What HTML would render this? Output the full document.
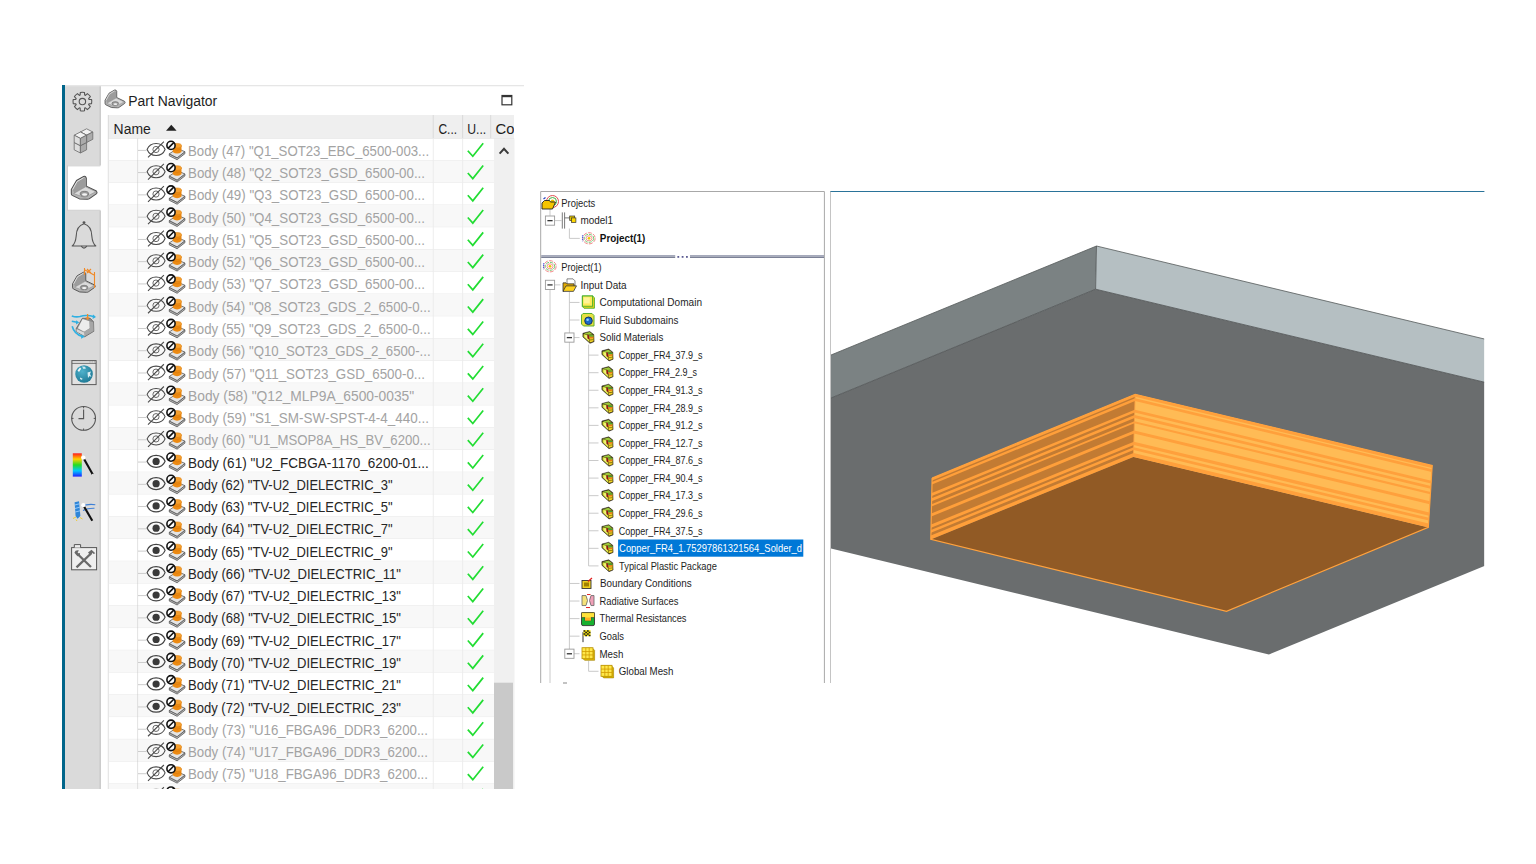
<!DOCTYPE html>
<html><head><meta charset="utf-8"><title>Part Navigator</title>
<style>html,body{margin:0;padding:0;background:#fff;width:1536px;height:864px;overflow:hidden;font-family:"Liberation Sans",sans-serif} svg{display:block}</style>
</head><body>
<svg width="1536" height="864" viewBox="0 0 1536 864" font-family="Liberation Sans, sans-serif">
<defs>
<clipPath id="gridclip"><rect x="108" y="138.5" width="406" height="650.5"/></clipPath>
<clipPath id="coclip"><rect x="491" y="115" width="23" height="23.5"/></clipPath>
<clipPath id="viewclip"><rect x="831" y="191.5" width="653.4" height="491.5"/></clipPath>
<g id="eyeOn">
  <path d="M147.1 11.3 C150.3 3.3, 161.9 3.3, 165.1 11.3 C161.9 19.3, 150.3 19.3, 147.1 11.3 Z" fill="none" stroke="#444" stroke-width="1.2"/>
  <circle cx="156.1" cy="11.4" r="3.6" fill="#3a3a3a"/>
</g>
<g id="eyeOff">
  <path d="M147.1 11.2 C150.3 3.2, 161.9 3.2, 165.1 11.2 C161.9 19.2, 150.3 19.2, 147.1 11.2 Z" fill="none" stroke="#4a4a4a" stroke-width="1.05"/>
  <circle cx="156" cy="11.2" r="3.1" fill="none" stroke="#6a6a6a" stroke-width="1"/>
  <line x1="148" y1="19.1" x2="163.9" y2="3.3" stroke="#4a4a4a" stroke-width="1.1"/>
</g>
<g id="body">
  <path d="M169.3 15.5 L177.1 19.5 L184.9 13.4 L184.9 15.4 L177.1 21.4 L169.3 17.5 Z" fill="#b8b8b8" stroke="#555" stroke-width="0.8" stroke-linejoin="round"/>
  <path d="M169.3 15.5 L177.3 10.2 L184.9 13.4 L177.1 19.5 Z" fill="#e4e4e4" stroke="#555" stroke-width="0.8" stroke-linejoin="round"/>
  <path d="M172.7 7.4 L172.7 13.6 Q177.1 17 181.5 13.6 L181.5 7.4 Z" fill="#ec8a12"/>
  <ellipse cx="177.1" cy="7.4" rx="4.4" ry="2.3" fill="#f5a030" stroke="#d87a0a" stroke-width="0.5"/>
  <path d="M173.4 10.8 Q177.2 13.2 181 10.8" fill="none" stroke="#d8780c" stroke-width="0.6"/>
  <circle cx="171" cy="7.1" r="4.1" fill="#fff" stroke="#111" stroke-width="1.6"/>
  <line x1="174" y1="4.1" x2="168" y2="10.1" stroke="#111" stroke-width="1.6"/>
</g>
<g id="check">
  <path d="M467.8 12.4 L472.8 18.0 L483.2 5.0" fill="none" stroke="#22dd33" stroke-width="1.7"/>
</g>
</defs>
<rect width="1536" height="864" fill="#ffffff"/>
<rect x="62" y="85" width="3" height="704" fill="#00658a"/><rect x="65" y="85.5" width="35.5" height="703.5" fill="#dadada"/><rect x="99.6" y="85.5" width="1.2" height="703.5" fill="#c4c4c4"/><rect x="65" y="85" width="459" height="1.3" fill="#e6e6e6"/><rect x="67.3" y="165.5" width="34" height="45" fill="#ffffff"/><rect x="67.3" y="165.5" width="33" height="0.8" fill="#c6c6c6"/><rect x="67.3" y="209.8" width="33" height="0.8" fill="#c6c6c6"/><rect x="67" y="165.5" width="0.8" height="45" fill="#c6c6c6"/><rect x="108" y="115" width="406" height="23.5" fill="#efefef"/><rect x="108" y="138" width="406" height="0.8" fill="#dcdcdc"/><rect x="432.7" y="115" width="1" height="23.5" fill="#dadada"/><rect x="462.1" y="115" width="1" height="23.5" fill="#dadada"/><rect x="490.2" y="115" width="1" height="23.5" fill="#dadada"/><rect x="107.8" y="115" width="1" height="674" fill="#dadada"/><rect x="494" y="138.5" width="20.5" height="650.5" fill="#f0f0f0"/><rect x="494" y="682.7" width="19" height="106.3" fill="#c9c9c9"/><path d="M499.6 153.6 L504 148.8 L508.4 153.6" fill="none" stroke="#3a3a3a" stroke-width="2"/><path d="M166 130.7 L171.3 124.8 L176.6 130.7 Z" fill="#222"/><rect x="502" y="95.5" width="9.8" height="9.3" fill="none" stroke="#333" stroke-width="1.2"/><rect x="502" y="95.2" width="9.8" height="2" fill="#333"/>
<g clip-path="url(#gridclip)"><rect x="108.8" y="138.30" width="385.2" height="22.264" fill="#ffffff"/><rect x="108.8" y="159.96" width="385.2" height="1" fill="#ececec"/><rect x="138" y="149.90" width="8.5" height="0.9" fill="#c8c8c8"/><use href="#eyeOff" x="0" y="138.30"/><use href="#body" x="0" y="138.30"/><use href="#check" x="0" y="138.30"/><rect x="108.8" y="160.56" width="385.2" height="22.264" fill="#f8f8f8"/><rect x="108.8" y="182.23" width="385.2" height="1" fill="#ececec"/><rect x="138" y="172.16" width="8.5" height="0.9" fill="#c8c8c8"/><use href="#eyeOff" x="0" y="160.56"/><use href="#body" x="0" y="160.56"/><use href="#check" x="0" y="160.56"/><rect x="108.8" y="182.83" width="385.2" height="22.264" fill="#ffffff"/><rect x="108.8" y="204.49" width="385.2" height="1" fill="#ececec"/><rect x="138" y="194.43" width="8.5" height="0.9" fill="#c8c8c8"/><use href="#eyeOff" x="0" y="182.83"/><use href="#body" x="0" y="182.83"/><use href="#check" x="0" y="182.83"/><rect x="108.8" y="205.09" width="385.2" height="22.264" fill="#f8f8f8"/><rect x="108.8" y="226.76" width="385.2" height="1" fill="#ececec"/><rect x="138" y="216.69" width="8.5" height="0.9" fill="#c8c8c8"/><use href="#eyeOff" x="0" y="205.09"/><use href="#body" x="0" y="205.09"/><use href="#check" x="0" y="205.09"/><rect x="108.8" y="227.36" width="385.2" height="22.264" fill="#ffffff"/><rect x="108.8" y="249.02" width="385.2" height="1" fill="#ececec"/><rect x="138" y="238.96" width="8.5" height="0.9" fill="#c8c8c8"/><use href="#eyeOff" x="0" y="227.36"/><use href="#body" x="0" y="227.36"/><use href="#check" x="0" y="227.36"/><rect x="108.8" y="249.62" width="385.2" height="22.264" fill="#f8f8f8"/><rect x="108.8" y="271.28" width="385.2" height="1" fill="#ececec"/><rect x="138" y="261.22" width="8.5" height="0.9" fill="#c8c8c8"/><use href="#eyeOff" x="0" y="249.62"/><use href="#body" x="0" y="249.62"/><use href="#check" x="0" y="249.62"/><rect x="108.8" y="271.88" width="385.2" height="22.264" fill="#ffffff"/><rect x="108.8" y="293.55" width="385.2" height="1" fill="#ececec"/><rect x="138" y="283.48" width="8.5" height="0.9" fill="#c8c8c8"/><use href="#eyeOff" x="0" y="271.88"/><use href="#body" x="0" y="271.88"/><use href="#check" x="0" y="271.88"/><rect x="108.8" y="294.15" width="385.2" height="22.264" fill="#f8f8f8"/><rect x="108.8" y="315.81" width="385.2" height="1" fill="#ececec"/><rect x="138" y="305.75" width="8.5" height="0.9" fill="#c8c8c8"/><use href="#eyeOff" x="0" y="294.15"/><use href="#body" x="0" y="294.15"/><use href="#check" x="0" y="294.15"/><rect x="108.8" y="316.41" width="385.2" height="22.264" fill="#ffffff"/><rect x="108.8" y="338.08" width="385.2" height="1" fill="#ececec"/><rect x="138" y="328.01" width="8.5" height="0.9" fill="#c8c8c8"/><use href="#eyeOff" x="0" y="316.41"/><use href="#body" x="0" y="316.41"/><use href="#check" x="0" y="316.41"/><rect x="108.8" y="338.68" width="385.2" height="22.264" fill="#f8f8f8"/><rect x="108.8" y="360.34" width="385.2" height="1" fill="#ececec"/><rect x="138" y="350.28" width="8.5" height="0.9" fill="#c8c8c8"/><use href="#eyeOff" x="0" y="338.68"/><use href="#body" x="0" y="338.68"/><use href="#check" x="0" y="338.68"/><rect x="108.8" y="360.94" width="385.2" height="22.264" fill="#ffffff"/><rect x="108.8" y="382.60" width="385.2" height="1" fill="#ececec"/><rect x="138" y="372.54" width="8.5" height="0.9" fill="#c8c8c8"/><use href="#eyeOff" x="0" y="360.94"/><use href="#body" x="0" y="360.94"/><use href="#check" x="0" y="360.94"/><rect x="108.8" y="383.20" width="385.2" height="22.264" fill="#f8f8f8"/><rect x="108.8" y="404.87" width="385.2" height="1" fill="#ececec"/><rect x="138" y="394.80" width="8.5" height="0.9" fill="#c8c8c8"/><use href="#eyeOff" x="0" y="383.20"/><use href="#body" x="0" y="383.20"/><use href="#check" x="0" y="383.20"/><rect x="108.8" y="405.47" width="385.2" height="22.264" fill="#ffffff"/><rect x="108.8" y="427.13" width="385.2" height="1" fill="#ececec"/><rect x="138" y="417.07" width="8.5" height="0.9" fill="#c8c8c8"/><use href="#eyeOff" x="0" y="405.47"/><use href="#body" x="0" y="405.47"/><use href="#check" x="0" y="405.47"/><rect x="108.8" y="427.73" width="385.2" height="22.264" fill="#f8f8f8"/><rect x="108.8" y="449.40" width="385.2" height="1" fill="#ececec"/><rect x="138" y="439.33" width="8.5" height="0.9" fill="#c8c8c8"/><use href="#eyeOff" x="0" y="427.73"/><use href="#body" x="0" y="427.73"/><use href="#check" x="0" y="427.73"/><rect x="108.8" y="450.00" width="385.2" height="22.264" fill="#ffffff"/><rect x="108.8" y="471.66" width="385.2" height="1" fill="#ececec"/><rect x="138" y="461.60" width="8.5" height="0.9" fill="#c8c8c8"/><use href="#eyeOn" x="0" y="450.00"/><use href="#body" x="0" y="450.00"/><use href="#check" x="0" y="450.00"/><rect x="108.8" y="472.26" width="385.2" height="22.264" fill="#f8f8f8"/><rect x="108.8" y="493.92" width="385.2" height="1" fill="#ececec"/><rect x="138" y="483.86" width="8.5" height="0.9" fill="#c8c8c8"/><use href="#eyeOn" x="0" y="472.26"/><use href="#body" x="0" y="472.26"/><use href="#check" x="0" y="472.26"/><rect x="108.8" y="494.52" width="385.2" height="22.264" fill="#ffffff"/><rect x="108.8" y="516.19" width="385.2" height="1" fill="#ececec"/><rect x="138" y="506.12" width="8.5" height="0.9" fill="#c8c8c8"/><use href="#eyeOn" x="0" y="494.52"/><use href="#body" x="0" y="494.52"/><use href="#check" x="0" y="494.52"/><rect x="108.8" y="516.79" width="385.2" height="22.264" fill="#f8f8f8"/><rect x="108.8" y="538.45" width="385.2" height="1" fill="#ececec"/><rect x="138" y="528.39" width="8.5" height="0.9" fill="#c8c8c8"/><use href="#eyeOn" x="0" y="516.79"/><use href="#body" x="0" y="516.79"/><use href="#check" x="0" y="516.79"/><rect x="108.8" y="539.05" width="385.2" height="22.264" fill="#ffffff"/><rect x="108.8" y="560.72" width="385.2" height="1" fill="#ececec"/><rect x="138" y="550.65" width="8.5" height="0.9" fill="#c8c8c8"/><use href="#eyeOn" x="0" y="539.05"/><use href="#body" x="0" y="539.05"/><use href="#check" x="0" y="539.05"/><rect x="108.8" y="561.32" width="385.2" height="22.264" fill="#f8f8f8"/><rect x="108.8" y="582.98" width="385.2" height="1" fill="#ececec"/><rect x="138" y="572.92" width="8.5" height="0.9" fill="#c8c8c8"/><use href="#eyeOn" x="0" y="561.32"/><use href="#body" x="0" y="561.32"/><use href="#check" x="0" y="561.32"/><rect x="108.8" y="583.58" width="385.2" height="22.264" fill="#ffffff"/><rect x="108.8" y="605.24" width="385.2" height="1" fill="#ececec"/><rect x="138" y="595.18" width="8.5" height="0.9" fill="#c8c8c8"/><use href="#eyeOn" x="0" y="583.58"/><use href="#body" x="0" y="583.58"/><use href="#check" x="0" y="583.58"/><rect x="108.8" y="605.84" width="385.2" height="22.264" fill="#f8f8f8"/><rect x="108.8" y="627.51" width="385.2" height="1" fill="#ececec"/><rect x="138" y="617.44" width="8.5" height="0.9" fill="#c8c8c8"/><use href="#eyeOn" x="0" y="605.84"/><use href="#body" x="0" y="605.84"/><use href="#check" x="0" y="605.84"/><rect x="108.8" y="628.11" width="385.2" height="22.264" fill="#ffffff"/><rect x="108.8" y="649.77" width="385.2" height="1" fill="#ececec"/><rect x="138" y="639.71" width="8.5" height="0.9" fill="#c8c8c8"/><use href="#eyeOn" x="0" y="628.11"/><use href="#body" x="0" y="628.11"/><use href="#check" x="0" y="628.11"/><rect x="108.8" y="650.37" width="385.2" height="22.264" fill="#f8f8f8"/><rect x="108.8" y="672.04" width="385.2" height="1" fill="#ececec"/><rect x="138" y="661.97" width="8.5" height="0.9" fill="#c8c8c8"/><use href="#eyeOn" x="0" y="650.37"/><use href="#body" x="0" y="650.37"/><use href="#check" x="0" y="650.37"/><rect x="108.8" y="672.64" width="385.2" height="22.264" fill="#ffffff"/><rect x="108.8" y="694.30" width="385.2" height="1" fill="#ececec"/><rect x="138" y="684.24" width="8.5" height="0.9" fill="#c8c8c8"/><use href="#eyeOn" x="0" y="672.64"/><use href="#body" x="0" y="672.64"/><use href="#check" x="0" y="672.64"/><rect x="108.8" y="694.90" width="385.2" height="22.264" fill="#f8f8f8"/><rect x="108.8" y="716.56" width="385.2" height="1" fill="#ececec"/><rect x="138" y="706.50" width="8.5" height="0.9" fill="#c8c8c8"/><use href="#eyeOn" x="0" y="694.90"/><use href="#body" x="0" y="694.90"/><use href="#check" x="0" y="694.90"/><rect x="108.8" y="717.16" width="385.2" height="22.264" fill="#ffffff"/><rect x="108.8" y="738.83" width="385.2" height="1" fill="#ececec"/><rect x="138" y="728.76" width="8.5" height="0.9" fill="#c8c8c8"/><use href="#eyeOff" x="0" y="717.16"/><use href="#body" x="0" y="717.16"/><use href="#check" x="0" y="717.16"/><rect x="108.8" y="739.43" width="385.2" height="22.264" fill="#f8f8f8"/><rect x="108.8" y="761.09" width="385.2" height="1" fill="#ececec"/><rect x="138" y="751.03" width="8.5" height="0.9" fill="#c8c8c8"/><use href="#eyeOff" x="0" y="739.43"/><use href="#body" x="0" y="739.43"/><use href="#check" x="0" y="739.43"/><rect x="108.8" y="761.69" width="385.2" height="22.264" fill="#ffffff"/><rect x="108.8" y="783.36" width="385.2" height="1" fill="#ececec"/><rect x="138" y="773.29" width="8.5" height="0.9" fill="#c8c8c8"/><use href="#eyeOff" x="0" y="761.69"/><use href="#body" x="0" y="761.69"/><use href="#check" x="0" y="761.69"/><rect x="108.8" y="783.96" width="385.2" height="22.264" fill="#f8f8f8"/><rect x="108.8" y="805.62" width="385.2" height="1" fill="#ececec"/><rect x="138" y="795.56" width="8.5" height="0.9" fill="#c8c8c8"/><use href="#eyeOff" x="0" y="783.96"/><use href="#body" x="0" y="783.96"/><use href="#check" x="0" y="783.96"/><rect x="432.8" y="138.5" width="0.9" height="650.5" fill="#ececec"/><rect x="462.2" y="138.5" width="0.9" height="650.5" fill="#ececec"/><line x1="137.6" y1="138.5" x2="137.6" y2="789" stroke="#bdbdbd" stroke-width="0.9" stroke-dasharray="1 1"/></g>
<path d="M80.15 95.08 L80.29 92.44 A9.4 9.4 0 0 1 84.51 92.44 L84.65 95.08 A6.9 6.9 0 0 1 85.42 95.40 L87.38 93.63 A9.4 9.4 0 0 1 90.37 96.62 L88.60 98.58 A6.9 6.9 0 0 1 88.92 99.35 L91.56 99.49 A9.4 9.4 0 0 1 91.56 103.71 L88.92 103.85 A6.9 6.9 0 0 1 88.60 104.62 L90.37 106.58 A9.4 9.4 0 0 1 87.38 109.57 L85.42 107.80 A6.9 6.9 0 0 1 84.65 108.12 L84.51 110.76 A9.4 9.4 0 0 1 80.29 110.76 L80.15 108.12 A6.9 6.9 0 0 1 79.38 107.80 L77.42 109.57 A9.4 9.4 0 0 1 74.43 106.58 L76.20 104.62 A6.9 6.9 0 0 1 75.88 103.85 L73.24 103.71 A9.4 9.4 0 0 1 73.24 99.49 L75.88 99.35 A6.9 6.9 0 0 1 76.20 98.58 L74.43 96.62 A9.4 9.4 0 0 1 77.42 93.63 L79.38 95.40 A6.9 6.9 0 0 1 80.15 95.08 Z" fill="none" stroke="#555" stroke-width="1.1" stroke-linejoin="round"/><circle cx="82.4" cy="101.6" r="3.2" fill="none" stroke="#555" stroke-width="1.1"/><path d="M80.4 139.3 L86.60000000000001 142.5 L80.4 145.70000000000002 L74.2 142.5 Z" fill="#f2f2f2" stroke="#6a6a6a" stroke-width="0.8" stroke-linejoin="round"/><path d="M74.2 142.5 L80.4 145.70000000000002 L80.4 153.00000000000003 L74.2 149.8 Z" fill="#dedede" stroke="#6a6a6a" stroke-width="0.8" stroke-linejoin="round"/><path d="M80.4 145.70000000000002 L86.60000000000001 142.5 L86.60000000000001 149.8 L80.4 153.00000000000003 Z" fill="#ababab" stroke="#6a6a6a" stroke-width="0.8" stroke-linejoin="round"/><path d="M86.6 128.8 L92.8 132.0 L86.6 135.20000000000002 L80.39999999999999 132.0 Z" fill="#f2f2f2" stroke="#6a6a6a" stroke-width="0.8" stroke-linejoin="round"/><path d="M80.39999999999999 132.0 L86.6 135.20000000000002 L86.6 142.50000000000003 L80.39999999999999 139.3 Z" fill="#dedede" stroke="#6a6a6a" stroke-width="0.8" stroke-linejoin="round"/><path d="M86.6 135.20000000000002 L92.8 132.0 L92.8 139.3 L86.6 142.50000000000003 Z" fill="#ababab" stroke="#6a6a6a" stroke-width="0.8" stroke-linejoin="round"/><path d="M80.4 132 L86.60000000000001 135.2 L80.4 138.4 L74.2 135.2 Z" fill="#f2f2f2" stroke="#6a6a6a" stroke-width="0.8" stroke-linejoin="round"/><path d="M74.2 135.2 L80.4 138.4 L80.4 145.70000000000002 L74.2 142.5 Z" fill="#dedede" stroke="#6a6a6a" stroke-width="0.8" stroke-linejoin="round"/><path d="M80.4 138.4 L86.60000000000001 135.2 L86.60000000000001 142.5 L80.4 145.70000000000002 Z" fill="#ababab" stroke="#6a6a6a" stroke-width="0.8" stroke-linejoin="round"/><g transform="translate(71,176.2) scale(1.0)">
<path d="M0.3 13.4 L5.5 4.3 L12.6 0.3 Q14.5 -0.4 15.3 1.9 L15.3 9.9 L25.4 14.8 Q26.6 16.2 25.6 17.4 L18.5 22.4 Q17.5 23.2 16 23.1 L8.5 22.7 L1.2 19.2 Q0.2 18.5 0.3 17.2 Z" fill="#b4b4b4" stroke="#4e4e4e" stroke-width="1.05" stroke-linejoin="round"/>
<path d="M1.8 13.6 L6.2 5.2 L12.9 1.4 L14.4 2.4 L14.4 10.6 L8 14.3 L3.4 17.2 Z" fill="#9c9c9c"/>
<path d="M1.6 13.4 L6 5.4 L12.6 1.5" fill="none" stroke="#e6e6e6" stroke-width="0.9"/>
<path d="M2.6 17.4 L14.6 10.6 L24.8 15.5 L14 21.3 Z" fill="#dadada" stroke="#808080" stroke-width="0.5"/>
<ellipse cx="13.4" cy="17.6" rx="4.3" ry="2.5" fill="#9a9a9a" stroke="#5a5a5a" stroke-width="0.6"/>
<ellipse cx="13.6" cy="18.3" rx="2.6" ry="1.2" fill="#f4f4f4"/>
</g><path d="M72.2 246 Q75.5 243.5 76.2 236 Q76.5 226 84 223.8 Q91.5 226 91.8 236 Q92.5 243.5 95.8 246 Z" fill="none" stroke="#555" stroke-width="1.1" stroke-linejoin="round"/><circle cx="84" cy="222.6" r="1.4" fill="#555"/><path d="M81.2 246.2 Q84 250 86.8 246.2" fill="none" stroke="#555" stroke-width="1.1"/><g transform="translate(72.3,272) scale(0.88)">
<path d="M0.3 13.4 L5.5 4.3 L12.6 0.3 Q14.5 -0.4 15.3 1.9 L15.3 9.9 L25.4 14.8 Q26.6 16.2 25.6 17.4 L18.5 22.4 Q17.5 23.2 16 23.1 L8.5 22.7 L1.2 19.2 Q0.2 18.5 0.3 17.2 Z" fill="#b4b4b4" stroke="#4e4e4e" stroke-width="1.05" stroke-linejoin="round"/>
<path d="M1.8 13.6 L6.2 5.2 L12.9 1.4 L14.4 2.4 L14.4 10.6 L8 14.3 L3.4 17.2 Z" fill="#9c9c9c"/>
<path d="M1.6 13.4 L6 5.4 L12.6 1.5" fill="none" stroke="#e6e6e6" stroke-width="0.9"/>
<path d="M2.6 17.4 L14.6 10.6 L24.8 15.5 L14 21.3 Z" fill="#dadada" stroke="#808080" stroke-width="0.5"/>
<ellipse cx="13.4" cy="17.6" rx="4.3" ry="2.5" fill="#9a9a9a" stroke="#5a5a5a" stroke-width="0.6"/>
<ellipse cx="13.6" cy="18.3" rx="2.6" ry="1.2" fill="#f4f4f4"/>
</g><path d="M84.5 268 L84.5 275 M94.5 272 L94.5 288 M85 270 L94 275 M87 269 L91 273 M91 269 L87 273" fill="none" stroke="#f08a28" stroke-width="1.1"/><path d="M82.4 318.2 L90.5 318.5 L93.5 321.8 L93.8 331.3 L84.7 336.8 L76.1 331.3 L76.3 328.4 Z" fill="#8c8c8c" stroke="#555" stroke-width="0.7" stroke-linejoin="round"/><path d="M82.6 319 L89.5 321.2 L89.8 328.2 L84.2 331.8 L77.8 328.2 Z" fill="#ececec"/><path d="M89.5 321.2 L93.4 322.2 L93.6 331 L84.7 336.2 L84.2 331.8 L89.8 328.2 Z" fill="#a6a6a6"/><path d="M76.6 329 L84.2 332.6 L84.5 336 L76.5 331.5 Z" fill="#d8d8d8"/><path d="M71.8 315.9 Q76 317.5 80 316.5 Q86 314.5 94.5 316.8" fill="none" stroke="#2fb0e2" stroke-width="1.6"/><path d="M93 314.6 L96 317 L92.6 318.9 Z" fill="#2fb0e2"/><path d="M71.8 321.3 L77 322.3" fill="none" stroke="#2fb0e2" stroke-width="1.6"/><path d="M76.2 320.2 L79.2 322.6 L76 324.4 Z" fill="#2fb0e2"/><path d="M72.2 326.3 Q74 334 82.5 336.6" fill="none" stroke="#2fb0e2" stroke-width="1.6"/><path d="M81.5 334.6 L84.8 336.8 L81 338.8 Z" fill="#2fb0e2"/><path d="M87.6 314 L87.6 318" fill="none" stroke="#f08a28" stroke-width="1.3"/><path d="M85.4 317.2 L89.8 317.2 L87.6 320.2 Z" fill="#f08a28"/><rect x="71.9" y="360.6" width="24.2" height="24" fill="#e2e2e2" stroke="#5a5a5a" stroke-width="1"/><line x1="71.9" y1="363.4" x2="96.1" y2="363.4" stroke="#5a5a5a" stroke-width="0.8"/><path d="M89.5 361.9 h1 M91.7 361.9 h1 M93.9 361.9 h1" stroke="#888" stroke-width="0.8"/><defs><radialGradient id="globeg" cx="0.4" cy="0.35" r="0.7"><stop offset="0" stop-color="#4fb2cc"/><stop offset="1" stop-color="#1d7894"/></radialGradient></defs><circle cx="84.05" cy="374" r="8.8" fill="url(#globeg)"/><path d="M77.5 370.5 L80 367.5 L81.2 368.8 L79 372 Z" fill="#f4f8fa"/><path d="M82 366.5 L85 366.8 L86 368.5 L83.5 369 Z" fill="#cfe8ef"/><path d="M87.5 372.5 L91 371.5 L90 374 L91.5 377 L89.5 376 L88 378 Z" fill="#d8eef4"/><path d="M80 377.5 L82.5 378.5 L82 380 L80 379 Z" fill="#cfe8ef"/><circle cx="83.6" cy="418.4" r="11.9" fill="none" stroke="#555" stroke-width="1.1"/><path d="M83.6 409.6 L83.6 418.6 L78.5 418.6" fill="none" stroke="#555" stroke-width="1.1"/><path d="M83.6 406.5 v1.8 M83.6 428.5 v1.8 M71.7 418.4 h1.8 M93.7 418.4 h1.8" stroke="#555" stroke-width="1"/><defs><linearGradient id="rainbow" x1="0" y1="0" x2="0" y2="1">
<stop offset="0" stop-color="#ff1a1a"/><stop offset="0.25" stop-color="#ffd000"/><stop offset="0.5" stop-color="#22dd22"/><stop offset="0.75" stop-color="#00c8ff"/><stop offset="1" stop-color="#2020ff"/></linearGradient></defs><rect x="72.8" y="453.3" width="9" height="23.3" fill="url(#rainbow)"/><line x1="83.6" y1="458.3" x2="92.8" y2="474.6" stroke="#111" stroke-width="2.1"/><circle cx="83.3" cy="457.6" r="2.2" fill="#fff"/><circle cx="92.8" cy="474.8" r="1" fill="#ddd"/><path d="M74.6 502.2 L79 501.2 L80.4 516 L77.5 518.8 L75.6 516 Z" fill="#2f86d8"/><path d="M74.8 505 L79.4 503.8 M75 508.5 L79.8 507.2 M75.2 512 L80 510.8" stroke="#9fd0ff" stroke-width="0.9"/><path d="M82 506.5 Q88 503.5 95.3 504.8 M83 510.5 Q88 508 94.5 508.2" fill="none" stroke="#3d7fd6" stroke-width="1.1"/><path d="M73 518.5 L76 517 M80 517.5 L82.5 519 M76 519.5 L77 521" stroke="#f0c820" stroke-width="0.9"/><line x1="83.6" y1="505.8" x2="92.3" y2="520.8" stroke="#111" stroke-width="2.1"/><circle cx="83.3" cy="505.2" r="2.1" fill="#fff"/><rect x="71.6" y="547.6" width="25" height="22.2" fill="#efefef" stroke="#555" stroke-width="1"/><path d="M74.3 547.6 L74.3 544.6 L80.6 544.6 L80.6 547.6" fill="#efefef" stroke="#555" stroke-width="1"/><path d="M77 553.5 L91 567 M91.5 553 L76.5 567.3" stroke="#6a6a6a" stroke-width="2.3"/><path d="M74.4 552.8 Q75.5 549.5 79 550.6 L77.6 552.2 L78.4 553.6 L80 553 Q80.6 556 77.4 556.2 Z" fill="#6a6a6a"/><path d="M88 552.6 L91.5 549.8 L95.3 553.2 L93.6 554 L92.4 552.8 L90.4 555.6 Z" fill="#6a6a6a"/><g transform="translate(104.8,89.8) scale(0.78)">
<path d="M0.3 13.4 L5.5 4.3 L12.6 0.3 Q14.5 -0.4 15.3 1.9 L15.3 9.9 L25.4 14.8 Q26.6 16.2 25.6 17.4 L18.5 22.4 Q17.5 23.2 16 23.1 L8.5 22.7 L1.2 19.2 Q0.2 18.5 0.3 17.2 Z" fill="#b4b4b4" stroke="#4e4e4e" stroke-width="1.05" stroke-linejoin="round"/>
<path d="M1.8 13.6 L6.2 5.2 L12.9 1.4 L14.4 2.4 L14.4 10.6 L8 14.3 L3.4 17.2 Z" fill="#9c9c9c"/>
<path d="M1.6 13.4 L6 5.4 L12.6 1.5" fill="none" stroke="#e6e6e6" stroke-width="0.9"/>
<path d="M2.6 17.4 L14.6 10.6 L24.8 15.5 L14 21.3 Z" fill="#dadada" stroke="#808080" stroke-width="0.5"/>
<ellipse cx="13.4" cy="17.6" rx="4.3" ry="2.5" fill="#9a9a9a" stroke="#5a5a5a" stroke-width="0.6"/>
<ellipse cx="13.6" cy="18.3" rx="2.6" ry="1.2" fill="#f4f4f4"/>
</g>
<rect x="540.5" y="191.5" width="284" height="491.5" fill="#ffffff"/><path d="M540.7 683 L540.7 191.5 L824.4 191.5 L824.4 683" fill="none" stroke="#a8a8a8" stroke-width="1"/><rect x="541.2" y="255" width="134" height="1.6" fill="#a6aabb"/><line x1="550" y1="289.46500000000003" x2="550" y2="683" stroke="#c4c4c4" stroke-width="0.9"/><line x1="569.4" y1="291.865" x2="569.4" y2="649.13" stroke="#c4c4c4" stroke-width="0.9"/><line x1="588.6" y1="344.56" x2="588.6" y2="565.905" stroke="#c4c4c4" stroke-width="0.9"/><line x1="588.6" y1="660.73" x2="588.6" y2="671.2950000000001" stroke="#c4c4c4" stroke-width="0.9"/><line x1="554.6" y1="284.87" x2="560.5" y2="284.87" stroke="#c4c4c4" stroke-width="0.9"/><line x1="569.4" y1="302.43" x2="579.5" y2="302.43" stroke="#c4c4c4" stroke-width="0.9"/><line x1="569.4" y1="320.00" x2="579.5" y2="320.00" stroke="#c4c4c4" stroke-width="0.9"/><line x1="574.0" y1="337.56" x2="579.5" y2="337.56" stroke="#c4c4c4" stroke-width="0.9"/><line x1="588.6" y1="355.12" x2="598.5" y2="355.12" stroke="#c4c4c4" stroke-width="0.9"/><line x1="588.6" y1="372.69" x2="598.5" y2="372.69" stroke="#c4c4c4" stroke-width="0.9"/><line x1="588.6" y1="390.25" x2="598.5" y2="390.25" stroke="#c4c4c4" stroke-width="0.9"/><line x1="588.6" y1="407.82" x2="598.5" y2="407.82" stroke="#c4c4c4" stroke-width="0.9"/><line x1="588.6" y1="425.38" x2="598.5" y2="425.38" stroke="#c4c4c4" stroke-width="0.9"/><line x1="588.6" y1="442.95" x2="598.5" y2="442.95" stroke="#c4c4c4" stroke-width="0.9"/><line x1="588.6" y1="460.51" x2="598.5" y2="460.51" stroke="#c4c4c4" stroke-width="0.9"/><line x1="588.6" y1="478.08" x2="598.5" y2="478.08" stroke="#c4c4c4" stroke-width="0.9"/><line x1="588.6" y1="495.65" x2="598.5" y2="495.65" stroke="#c4c4c4" stroke-width="0.9"/><line x1="588.6" y1="513.21" x2="598.5" y2="513.21" stroke="#c4c4c4" stroke-width="0.9"/><line x1="588.6" y1="530.78" x2="598.5" y2="530.78" stroke="#c4c4c4" stroke-width="0.9"/><line x1="588.6" y1="548.34" x2="598.5" y2="548.34" stroke="#c4c4c4" stroke-width="0.9"/><line x1="588.6" y1="565.90" x2="598.5" y2="565.90" stroke="#c4c4c4" stroke-width="0.9"/><line x1="569.4" y1="583.47" x2="579.5" y2="583.47" stroke="#c4c4c4" stroke-width="0.9"/><line x1="569.4" y1="601.04" x2="579.5" y2="601.04" stroke="#c4c4c4" stroke-width="0.9"/><line x1="569.4" y1="618.60" x2="579.5" y2="618.60" stroke="#c4c4c4" stroke-width="0.9"/><line x1="569.4" y1="636.16" x2="579.5" y2="636.16" stroke="#c4c4c4" stroke-width="0.9"/><line x1="574.0" y1="653.73" x2="579.5" y2="653.73" stroke="#c4c4c4" stroke-width="0.9"/><line x1="588.6" y1="671.30" x2="598.5" y2="671.30" stroke="#c4c4c4" stroke-width="0.9"/><rect x="541.2" y="256.6" width="134" height="1.4" fill="#7c8196"/><rect x="690" y="255" width="134" height="1.6" fill="#a6aabb"/><rect x="690" y="256.6" width="134" height="1.4" fill="#7c8196"/><rect x="677.4" y="256" width="1.8" height="1.8" fill="#5c5c92"/><rect x="681.7" y="256" width="1.8" height="1.8" fill="#5c5c92"/><rect x="686.0" y="256" width="1.8" height="1.8" fill="#5c5c92"/><line x1="550" y1="209" x2="550" y2="215.7" stroke="#c4c4c4" stroke-width="0.9"/><line x1="554.6" y1="220.6" x2="561.5" y2="220.6" stroke="#c4c4c4" stroke-width="0.9"/><rect x="545.4" y="216.0" width="9.2" height="9.2" fill="#fff" stroke="#9a9a9a" stroke-width="0.9"/><rect x="547.4" y="220.0" width="5.2" height="1.3" fill="#333"/><path d="M569.4 228.5 L569.4 238.4 L579.8 238.4" fill="none" stroke="#c4c4c4" stroke-width="0.9"/><g transform="translate(541.5,195)">
<circle cx="11" cy="6.5" r="6" fill="none" stroke="#e05050" stroke-width="1"/>
<circle cx="11" cy="6.5" r="4" fill="none" stroke="#40b040" stroke-width="1"/>
<circle cx="11" cy="6.5" r="2" fill="#f2c400"/>
<path d="M0.5 8 L3 5.5 L8 5.5 L9 7 L14 7 L11 14 L0.5 14 Z" fill="#f5c400" stroke="#222" stroke-width="0.9"/>
<path d="M2 4 L4 2.5" stroke="#2040c0" stroke-width="1.2"/>
</g><g transform="translate(562,212)">
<path d="M0.3 0.4 L0.3 16.6 M2.6 0.4 L2.6 16.6" stroke="#6a6a6a" stroke-width="0.9"/>
<path d="M2.6 5.9 L7.7 5.9" stroke="#6a6a6a" stroke-width="0.9"/>
<rect x="7.7" y="4" width="5" height="4.5" fill="#e8c800" stroke="#333" stroke-width="0.7"/>
<rect x="9.4" y="5.9" width="4.5" height="4.5" fill="#ffd800" stroke="#333" stroke-width="0.7"/>
</g><g transform="translate(582,232.3)">
<ellipse cx="7" cy="6" rx="6.2" ry="5.6" fill="none" stroke="#f07a7a" stroke-width="0.9" stroke-dasharray="4 1.2"/>
<ellipse cx="7" cy="6" rx="4.7" ry="4" fill="none" stroke="#5cc05c" stroke-width="0.9" stroke-dasharray="3 1"/>
<ellipse cx="7" cy="6" rx="3" ry="2.5" fill="none" stroke="#f07a7a" stroke-width="0.8"/>
<circle cx="7" cy="6" r="1.4" fill="#f0c800"/>
<path d="M0.6 3 L0.6 9" stroke="#5060e0" stroke-width="1.3" stroke-dasharray="1.2 0.6"/>
</g><g transform="translate(543,260.3)">
<ellipse cx="7" cy="6" rx="6.2" ry="5.6" fill="none" stroke="#f07a7a" stroke-width="0.9" stroke-dasharray="4 1.2"/>
<ellipse cx="7" cy="6" rx="4.7" ry="4" fill="none" stroke="#5cc05c" stroke-width="0.9" stroke-dasharray="3 1"/>
<ellipse cx="7" cy="6" rx="3" ry="2.5" fill="none" stroke="#f07a7a" stroke-width="0.8"/>
<circle cx="7" cy="6" r="1.4" fill="#f0c800"/>
<path d="M0.6 3 L0.6 9" stroke="#5060e0" stroke-width="1.3" stroke-dasharray="1.2 0.6"/>
</g><rect x="545.4" y="280.265" width="9.2" height="9.2" fill="#fff" stroke="#9a9a9a" stroke-width="0.9"/><rect x="547.4" y="284.265" width="5.2" height="1.3" fill="#333"/><g transform="translate(562,277.865)">
<path d="M5 4 L5 1 L11 1 L13 3 L13 8 L5 8 Z" fill="#fff" stroke="#555" stroke-width="0.7"/>
<path d="M1 13.5 L1 5 L4 5 L5 6 L12 6 L12 8 Z" fill="#e0a800" stroke="#333" stroke-width="0.8"/>
<path d="M1 13.5 L4 8 L14.5 8 L11.5 13.5 Z" fill="#ffd21e" stroke="#333" stroke-width="0.8"/>
</g><g transform="translate(581.8,295.43)">
<path d="M0.5 0.5 L10.8 0.5 L12.6 2.2 L12.6 12.8 L2.2 12.8 L0.5 11 Z" fill="#f2d21a" stroke="#46b02a" stroke-width="0.9" stroke-linejoin="round"/>
<rect x="0.6" y="0.6" width="10.2" height="10.2" fill="#ffe95a" stroke="#46b02a" stroke-width="0.9"/>
<rect x="2" y="2" width="6" height="6" fill="#fff6a8" opacity="0.8"/>
</g><g transform="translate(581,312.995)">
<path d="M0.5 2 L2 0.5 L11 0.5 L13 2.5 L13 13 L2.5 13 L0.5 11 Z" fill="#e8e040" stroke="#5cb030" stroke-width="1"/>
<circle cx="7.5" cy="7.8" r="3.8" fill="#1a68c8" stroke="#0a2a60" stroke-width="0.9"/>
<circle cx="6.6" cy="6.8" r="1.3" fill="#8ed0ff"/>
</g><rect x="564.8" y="332.96" width="9.2" height="9.2" fill="#fff" stroke="#9a9a9a" stroke-width="0.9"/><rect x="566.8" y="336.96" width="5.2" height="1.3" fill="#333"/><g transform="translate(581,330.56)">
<path d="M1.9 2.7 L8.7 0.9 L12.8 4 L13.1 11.1 L9 12.8 L1.9 6.4 Z" fill="#2a2010" stroke="#2a2010" stroke-width="0.5" stroke-linejoin="round"/>
<path d="M2.6 3.4 L7.6 4.4 L8.4 11.8 L2.5 6.2 Z" fill="#d4e03a"/>
<path d="M4 4.4 L6.6 5 L7.2 9.8 L4.2 7 Z" fill="#f0f27a"/>
<path d="M2.8 3 L8.6 1.5 L12 4 L7.6 4.3 Z" fill="#9cc838"/>
<path d="M8.1 4.6 L12.4 4.5 L12.6 10.8 L8.8 12 Z" fill="#f2d628"/>
<path d="M8.1 4.8 L12.4 4.7 L12.4 6.1 L8.2 6.3 Z" fill="#3ca030"/>
<path d="M8.2 6.3 L12.4 6.1 L12.4 7.6 L8.3 7.9 Z" fill="#e87818"/>
<path d="M6.2 4.1 L7.9 4.5 L8.2 9 L6.5 8 Z" fill="#8a1515"/>
<path d="M8.4 9 L12.5 8.6 L12.5 9.4 L8.5 9.9 Z" fill="#8a7010"/>
</g><g transform="translate(600,348.125)">
<path d="M1.9 2.7 L8.7 0.9 L12.8 4 L13.1 11.1 L9 12.8 L1.9 6.4 Z" fill="#2a2010" stroke="#2a2010" stroke-width="0.5" stroke-linejoin="round"/>
<path d="M2.6 3.4 L7.6 4.4 L8.4 11.8 L2.5 6.2 Z" fill="#d4e03a"/>
<path d="M4 4.4 L6.6 5 L7.2 9.8 L4.2 7 Z" fill="#f0f27a"/>
<path d="M2.8 3 L8.6 1.5 L12 4 L7.6 4.3 Z" fill="#9cc838"/>
<path d="M8.1 4.6 L12.4 4.5 L12.6 10.8 L8.8 12 Z" fill="#f2d628"/>
<path d="M8.1 4.8 L12.4 4.7 L12.4 6.1 L8.2 6.3 Z" fill="#3ca030"/>
<path d="M8.2 6.3 L12.4 6.1 L12.4 7.6 L8.3 7.9 Z" fill="#e87818"/>
<path d="M6.2 4.1 L7.9 4.5 L8.2 9 L6.5 8 Z" fill="#8a1515"/>
<path d="M8.4 9 L12.5 8.6 L12.5 9.4 L8.5 9.9 Z" fill="#8a7010"/>
</g><g transform="translate(600,365.69000000000005)">
<path d="M1.9 2.7 L8.7 0.9 L12.8 4 L13.1 11.1 L9 12.8 L1.9 6.4 Z" fill="#2a2010" stroke="#2a2010" stroke-width="0.5" stroke-linejoin="round"/>
<path d="M2.6 3.4 L7.6 4.4 L8.4 11.8 L2.5 6.2 Z" fill="#d4e03a"/>
<path d="M4 4.4 L6.6 5 L7.2 9.8 L4.2 7 Z" fill="#f0f27a"/>
<path d="M2.8 3 L8.6 1.5 L12 4 L7.6 4.3 Z" fill="#9cc838"/>
<path d="M8.1 4.6 L12.4 4.5 L12.6 10.8 L8.8 12 Z" fill="#f2d628"/>
<path d="M8.1 4.8 L12.4 4.7 L12.4 6.1 L8.2 6.3 Z" fill="#3ca030"/>
<path d="M8.2 6.3 L12.4 6.1 L12.4 7.6 L8.3 7.9 Z" fill="#e87818"/>
<path d="M6.2 4.1 L7.9 4.5 L8.2 9 L6.5 8 Z" fill="#8a1515"/>
<path d="M8.4 9 L12.5 8.6 L12.5 9.4 L8.5 9.9 Z" fill="#8a7010"/>
</g><g transform="translate(600,383.255)">
<path d="M1.9 2.7 L8.7 0.9 L12.8 4 L13.1 11.1 L9 12.8 L1.9 6.4 Z" fill="#2a2010" stroke="#2a2010" stroke-width="0.5" stroke-linejoin="round"/>
<path d="M2.6 3.4 L7.6 4.4 L8.4 11.8 L2.5 6.2 Z" fill="#d4e03a"/>
<path d="M4 4.4 L6.6 5 L7.2 9.8 L4.2 7 Z" fill="#f0f27a"/>
<path d="M2.8 3 L8.6 1.5 L12 4 L7.6 4.3 Z" fill="#9cc838"/>
<path d="M8.1 4.6 L12.4 4.5 L12.6 10.8 L8.8 12 Z" fill="#f2d628"/>
<path d="M8.1 4.8 L12.4 4.7 L12.4 6.1 L8.2 6.3 Z" fill="#3ca030"/>
<path d="M8.2 6.3 L12.4 6.1 L12.4 7.6 L8.3 7.9 Z" fill="#e87818"/>
<path d="M6.2 4.1 L7.9 4.5 L8.2 9 L6.5 8 Z" fill="#8a1515"/>
<path d="M8.4 9 L12.5 8.6 L12.5 9.4 L8.5 9.9 Z" fill="#8a7010"/>
</g><g transform="translate(600,400.82000000000005)">
<path d="M1.9 2.7 L8.7 0.9 L12.8 4 L13.1 11.1 L9 12.8 L1.9 6.4 Z" fill="#2a2010" stroke="#2a2010" stroke-width="0.5" stroke-linejoin="round"/>
<path d="M2.6 3.4 L7.6 4.4 L8.4 11.8 L2.5 6.2 Z" fill="#d4e03a"/>
<path d="M4 4.4 L6.6 5 L7.2 9.8 L4.2 7 Z" fill="#f0f27a"/>
<path d="M2.8 3 L8.6 1.5 L12 4 L7.6 4.3 Z" fill="#9cc838"/>
<path d="M8.1 4.6 L12.4 4.5 L12.6 10.8 L8.8 12 Z" fill="#f2d628"/>
<path d="M8.1 4.8 L12.4 4.7 L12.4 6.1 L8.2 6.3 Z" fill="#3ca030"/>
<path d="M8.2 6.3 L12.4 6.1 L12.4 7.6 L8.3 7.9 Z" fill="#e87818"/>
<path d="M6.2 4.1 L7.9 4.5 L8.2 9 L6.5 8 Z" fill="#8a1515"/>
<path d="M8.4 9 L12.5 8.6 L12.5 9.4 L8.5 9.9 Z" fill="#8a7010"/>
</g><g transform="translate(600,418.385)">
<path d="M1.9 2.7 L8.7 0.9 L12.8 4 L13.1 11.1 L9 12.8 L1.9 6.4 Z" fill="#2a2010" stroke="#2a2010" stroke-width="0.5" stroke-linejoin="round"/>
<path d="M2.6 3.4 L7.6 4.4 L8.4 11.8 L2.5 6.2 Z" fill="#d4e03a"/>
<path d="M4 4.4 L6.6 5 L7.2 9.8 L4.2 7 Z" fill="#f0f27a"/>
<path d="M2.8 3 L8.6 1.5 L12 4 L7.6 4.3 Z" fill="#9cc838"/>
<path d="M8.1 4.6 L12.4 4.5 L12.6 10.8 L8.8 12 Z" fill="#f2d628"/>
<path d="M8.1 4.8 L12.4 4.7 L12.4 6.1 L8.2 6.3 Z" fill="#3ca030"/>
<path d="M8.2 6.3 L12.4 6.1 L12.4 7.6 L8.3 7.9 Z" fill="#e87818"/>
<path d="M6.2 4.1 L7.9 4.5 L8.2 9 L6.5 8 Z" fill="#8a1515"/>
<path d="M8.4 9 L12.5 8.6 L12.5 9.4 L8.5 9.9 Z" fill="#8a7010"/>
</g><g transform="translate(600,435.95000000000005)">
<path d="M1.9 2.7 L8.7 0.9 L12.8 4 L13.1 11.1 L9 12.8 L1.9 6.4 Z" fill="#2a2010" stroke="#2a2010" stroke-width="0.5" stroke-linejoin="round"/>
<path d="M2.6 3.4 L7.6 4.4 L8.4 11.8 L2.5 6.2 Z" fill="#d4e03a"/>
<path d="M4 4.4 L6.6 5 L7.2 9.8 L4.2 7 Z" fill="#f0f27a"/>
<path d="M2.8 3 L8.6 1.5 L12 4 L7.6 4.3 Z" fill="#9cc838"/>
<path d="M8.1 4.6 L12.4 4.5 L12.6 10.8 L8.8 12 Z" fill="#f2d628"/>
<path d="M8.1 4.8 L12.4 4.7 L12.4 6.1 L8.2 6.3 Z" fill="#3ca030"/>
<path d="M8.2 6.3 L12.4 6.1 L12.4 7.6 L8.3 7.9 Z" fill="#e87818"/>
<path d="M6.2 4.1 L7.9 4.5 L8.2 9 L6.5 8 Z" fill="#8a1515"/>
<path d="M8.4 9 L12.5 8.6 L12.5 9.4 L8.5 9.9 Z" fill="#8a7010"/>
</g><g transform="translate(600,453.515)">
<path d="M1.9 2.7 L8.7 0.9 L12.8 4 L13.1 11.1 L9 12.8 L1.9 6.4 Z" fill="#2a2010" stroke="#2a2010" stroke-width="0.5" stroke-linejoin="round"/>
<path d="M2.6 3.4 L7.6 4.4 L8.4 11.8 L2.5 6.2 Z" fill="#d4e03a"/>
<path d="M4 4.4 L6.6 5 L7.2 9.8 L4.2 7 Z" fill="#f0f27a"/>
<path d="M2.8 3 L8.6 1.5 L12 4 L7.6 4.3 Z" fill="#9cc838"/>
<path d="M8.1 4.6 L12.4 4.5 L12.6 10.8 L8.8 12 Z" fill="#f2d628"/>
<path d="M8.1 4.8 L12.4 4.7 L12.4 6.1 L8.2 6.3 Z" fill="#3ca030"/>
<path d="M8.2 6.3 L12.4 6.1 L12.4 7.6 L8.3 7.9 Z" fill="#e87818"/>
<path d="M6.2 4.1 L7.9 4.5 L8.2 9 L6.5 8 Z" fill="#8a1515"/>
<path d="M8.4 9 L12.5 8.6 L12.5 9.4 L8.5 9.9 Z" fill="#8a7010"/>
</g><g transform="translate(600,471.08000000000004)">
<path d="M1.9 2.7 L8.7 0.9 L12.8 4 L13.1 11.1 L9 12.8 L1.9 6.4 Z" fill="#2a2010" stroke="#2a2010" stroke-width="0.5" stroke-linejoin="round"/>
<path d="M2.6 3.4 L7.6 4.4 L8.4 11.8 L2.5 6.2 Z" fill="#d4e03a"/>
<path d="M4 4.4 L6.6 5 L7.2 9.8 L4.2 7 Z" fill="#f0f27a"/>
<path d="M2.8 3 L8.6 1.5 L12 4 L7.6 4.3 Z" fill="#9cc838"/>
<path d="M8.1 4.6 L12.4 4.5 L12.6 10.8 L8.8 12 Z" fill="#f2d628"/>
<path d="M8.1 4.8 L12.4 4.7 L12.4 6.1 L8.2 6.3 Z" fill="#3ca030"/>
<path d="M8.2 6.3 L12.4 6.1 L12.4 7.6 L8.3 7.9 Z" fill="#e87818"/>
<path d="M6.2 4.1 L7.9 4.5 L8.2 9 L6.5 8 Z" fill="#8a1515"/>
<path d="M8.4 9 L12.5 8.6 L12.5 9.4 L8.5 9.9 Z" fill="#8a7010"/>
</g><g transform="translate(600,488.64500000000004)">
<path d="M1.9 2.7 L8.7 0.9 L12.8 4 L13.1 11.1 L9 12.8 L1.9 6.4 Z" fill="#2a2010" stroke="#2a2010" stroke-width="0.5" stroke-linejoin="round"/>
<path d="M2.6 3.4 L7.6 4.4 L8.4 11.8 L2.5 6.2 Z" fill="#d4e03a"/>
<path d="M4 4.4 L6.6 5 L7.2 9.8 L4.2 7 Z" fill="#f0f27a"/>
<path d="M2.8 3 L8.6 1.5 L12 4 L7.6 4.3 Z" fill="#9cc838"/>
<path d="M8.1 4.6 L12.4 4.5 L12.6 10.8 L8.8 12 Z" fill="#f2d628"/>
<path d="M8.1 4.8 L12.4 4.7 L12.4 6.1 L8.2 6.3 Z" fill="#3ca030"/>
<path d="M8.2 6.3 L12.4 6.1 L12.4 7.6 L8.3 7.9 Z" fill="#e87818"/>
<path d="M6.2 4.1 L7.9 4.5 L8.2 9 L6.5 8 Z" fill="#8a1515"/>
<path d="M8.4 9 L12.5 8.6 L12.5 9.4 L8.5 9.9 Z" fill="#8a7010"/>
</g><g transform="translate(600,506.21000000000004)">
<path d="M1.9 2.7 L8.7 0.9 L12.8 4 L13.1 11.1 L9 12.8 L1.9 6.4 Z" fill="#2a2010" stroke="#2a2010" stroke-width="0.5" stroke-linejoin="round"/>
<path d="M2.6 3.4 L7.6 4.4 L8.4 11.8 L2.5 6.2 Z" fill="#d4e03a"/>
<path d="M4 4.4 L6.6 5 L7.2 9.8 L4.2 7 Z" fill="#f0f27a"/>
<path d="M2.8 3 L8.6 1.5 L12 4 L7.6 4.3 Z" fill="#9cc838"/>
<path d="M8.1 4.6 L12.4 4.5 L12.6 10.8 L8.8 12 Z" fill="#f2d628"/>
<path d="M8.1 4.8 L12.4 4.7 L12.4 6.1 L8.2 6.3 Z" fill="#3ca030"/>
<path d="M8.2 6.3 L12.4 6.1 L12.4 7.6 L8.3 7.9 Z" fill="#e87818"/>
<path d="M6.2 4.1 L7.9 4.5 L8.2 9 L6.5 8 Z" fill="#8a1515"/>
<path d="M8.4 9 L12.5 8.6 L12.5 9.4 L8.5 9.9 Z" fill="#8a7010"/>
</g><g transform="translate(600,523.7750000000001)">
<path d="M1.9 2.7 L8.7 0.9 L12.8 4 L13.1 11.1 L9 12.8 L1.9 6.4 Z" fill="#2a2010" stroke="#2a2010" stroke-width="0.5" stroke-linejoin="round"/>
<path d="M2.6 3.4 L7.6 4.4 L8.4 11.8 L2.5 6.2 Z" fill="#d4e03a"/>
<path d="M4 4.4 L6.6 5 L7.2 9.8 L4.2 7 Z" fill="#f0f27a"/>
<path d="M2.8 3 L8.6 1.5 L12 4 L7.6 4.3 Z" fill="#9cc838"/>
<path d="M8.1 4.6 L12.4 4.5 L12.6 10.8 L8.8 12 Z" fill="#f2d628"/>
<path d="M8.1 4.8 L12.4 4.7 L12.4 6.1 L8.2 6.3 Z" fill="#3ca030"/>
<path d="M8.2 6.3 L12.4 6.1 L12.4 7.6 L8.3 7.9 Z" fill="#e87818"/>
<path d="M6.2 4.1 L7.9 4.5 L8.2 9 L6.5 8 Z" fill="#8a1515"/>
<path d="M8.4 9 L12.5 8.6 L12.5 9.4 L8.5 9.9 Z" fill="#8a7010"/>
</g><g transform="translate(600,541.34)">
<path d="M1.9 2.7 L8.7 0.9 L12.8 4 L13.1 11.1 L9 12.8 L1.9 6.4 Z" fill="#2a2010" stroke="#2a2010" stroke-width="0.5" stroke-linejoin="round"/>
<path d="M2.6 3.4 L7.6 4.4 L8.4 11.8 L2.5 6.2 Z" fill="#d4e03a"/>
<path d="M4 4.4 L6.6 5 L7.2 9.8 L4.2 7 Z" fill="#f0f27a"/>
<path d="M2.8 3 L8.6 1.5 L12 4 L7.6 4.3 Z" fill="#9cc838"/>
<path d="M8.1 4.6 L12.4 4.5 L12.6 10.8 L8.8 12 Z" fill="#f2d628"/>
<path d="M8.1 4.8 L12.4 4.7 L12.4 6.1 L8.2 6.3 Z" fill="#3ca030"/>
<path d="M8.2 6.3 L12.4 6.1 L12.4 7.6 L8.3 7.9 Z" fill="#e87818"/>
<path d="M6.2 4.1 L7.9 4.5 L8.2 9 L6.5 8 Z" fill="#8a1515"/>
<path d="M8.4 9 L12.5 8.6 L12.5 9.4 L8.5 9.9 Z" fill="#8a7010"/>
</g><rect x="618.1" y="539.5" width="185.2" height="17.2" fill="#0078d7"/><g transform="translate(600,558.905)">
<path d="M1.9 2.7 L8.7 0.9 L12.8 4 L13.1 11.1 L9 12.8 L1.9 6.4 Z" fill="#2a2010" stroke="#2a2010" stroke-width="0.5" stroke-linejoin="round"/>
<path d="M2.6 3.4 L7.6 4.4 L8.4 11.8 L2.5 6.2 Z" fill="#d4e03a"/>
<path d="M4 4.4 L6.6 5 L7.2 9.8 L4.2 7 Z" fill="#f0f27a"/>
<path d="M2.8 3 L8.6 1.5 L12 4 L7.6 4.3 Z" fill="#9cc838"/>
<path d="M8.1 4.6 L12.4 4.5 L12.6 10.8 L8.8 12 Z" fill="#f2d628"/>
<path d="M8.1 4.8 L12.4 4.7 L12.4 6.1 L8.2 6.3 Z" fill="#3ca030"/>
<path d="M8.2 6.3 L12.4 6.1 L12.4 7.6 L8.3 7.9 Z" fill="#e87818"/>
<path d="M6.2 4.1 L7.9 4.5 L8.2 9 L6.5 8 Z" fill="#8a1515"/>
<path d="M8.4 9 L12.5 8.6 L12.5 9.4 L8.5 9.9 Z" fill="#8a7010"/>
</g><g transform="translate(581,576.47)">
<rect x="1" y="4" width="9" height="8" fill="#f0d020" stroke="#333" stroke-width="0.9"/>
<path d="M11 1.5 L7 5" stroke="#e02020" stroke-width="1.2"/>
<path d="M3 6 L8 6 L8 10 L3 10Z" fill="#a08000"/>
</g><g transform="translate(581,594.0350000000001)">
<path d="M1 1.5 L5 1.5 Q8 6.5 5 11.5 L1 11.5 Z" fill="#f5e27a" stroke="#666" stroke-width="0.8"/>
<path d="M13 1.5 L10 1.5 Q7 6.5 10 11.5 L13 11.5 Z" fill="#f0a0b8" stroke="#666" stroke-width="0.8"/>
<path d="M5 13.5 L9 13.5 M9.5 0.5 L6 0.5" stroke="#e02020" stroke-width="1"/>
</g><g transform="translate(581,611.6)">
<rect x="0.5" y="1" width="13" height="13" rx="1.5" fill="#18b030" stroke="#333" stroke-width="0.9"/>
<path d="M0.5 1 L13.5 1 L13.5 6 L10 6 L10 9 L4 9 L4 6 L0.5 6 Z" fill="#ffe23a" stroke="#333" stroke-width="0.6"/>
<path d="M4 6 L10 6 L10 9 L4 9 Z" fill="#ffb020"/>
</g><g transform="translate(581,629.165)">
<path d="M2 13 L2 3" stroke="#333" stroke-width="1"/>
<rect x="2.5" y="1" width="7" height="6" fill="#f5e000"/>
<path d="M2.5 1 h1.75 v1.5 h-1.75z M6 1 h1.75 v1.5 h-1.75z M4.25 2.5 h1.75 v1.5 h-1.75z M7.75 2.5 h1.75 v1.5 h-1.75z M2.5 4 h1.75 v1.5 h-1.75z M6 4 h1.75 v1.5 h-1.75z M4.25 5.5 h1.75 v1.5 h-1.75z M7.75 5.5 h1.75 v1.5 h-1.75z" fill="#222"/>
</g><rect x="564.8" y="649.13" width="9.2" height="9.2" fill="#fff" stroke="#9a9a9a" stroke-width="0.9"/><rect x="566.8" y="653.13" width="5.2" height="1.3" fill="#333"/><g transform="translate(581,646.73)">
<path d="M1.5 1.5 L11.5 1.5 L13.6 3.6 L13.6 13.6 L3.6 13.6 L1.5 11.5 Z" fill="#e0b800" stroke="#a08000" stroke-width="0.6"/>
<rect x="1" y="1" width="11" height="11" fill="#ffe84a" stroke="#b89000" stroke-width="0.8"/>
<path d="M4.8 1 L4.8 12 M8.2 1 L8.2 12 M1 4.8 L12 4.8 M1 8.2 L12 8.2" stroke="#d09a00" stroke-width="0.8"/>
</g><g transform="translate(600,664.2950000000001)">
<path d="M1.5 1.5 L11.5 1.5 L13.6 3.6 L13.6 13.6 L3.6 13.6 L1.5 11.5 Z" fill="#e0b800" stroke="#a08000" stroke-width="0.6"/>
<rect x="1" y="1" width="11" height="11" fill="#ffe84a" stroke="#b89000" stroke-width="0.8"/>
<path d="M4.8 1 L4.8 12 M8.2 1 L8.2 12 M1 4.8 L12 4.8 M1 8.2 L12 8.2" stroke="#d09a00" stroke-width="0.8"/>
</g><rect x="563" y="682.5" width="4" height="1" fill="#888"/>
<rect x="830" y="191" width="654.4" height="1" fill="#2a7399"/><rect x="830" y="191.5" width="1" height="491.5" fill="#c4c4c4"/><g clip-path="url(#viewclip)"><path d="M831 355 L1096.5 246 L1095.6 289.2 L831 398 Z" fill="#7b8283"/><path d="M1096.5 246 L1484.4 339 L1484.4 382.2 L1095.6 289.2 Z" fill="#b5bfc2"/><path d="M831 398 L1095.6 289.2 L1484.4 382.2 L1484.4 566 L1268.9 654.5 L831 548.6 Z" fill="#6a6d6e"/><path d="M831 355 L1096.5 246 L1484.4 339" fill="none" stroke="#555a5b" stroke-width="0.8"/><path d="M831 398 L1095.6 289.2 L1484.4 382.2" fill="none" stroke="#4e5253" stroke-width="0.8"/><path d="M1096.5 246 L1095.6 289.2" fill="none" stroke="#4e5253" stroke-width="0.8"/><polygon points="932.10,478.10 1135.20,394.30 1133.40,457.00 930.80,539.40" fill="#c27b33"/><polygon points="1135.20,394.30 1432.20,465.50 1428.30,527.40 1133.40,457.00" fill="#ffbb55"/><polygon points="930.80,539.40 1133.40,457.00 1428.30,527.40 1226.50,611.30" fill="#915a25"/><polygon points="932.10,478.10 1135.20,394.30 1135.13,396.81 932.05,480.55" fill="#ff9f3a"/><polygon points="1135.20,394.30 1432.20,465.50 1432.04,467.98 1135.13,396.81" fill="#ffa03c"/><polygon points="932.02,481.90 1135.09,398.19 1135.01,400.88 931.96,484.54" fill="#ff9f3a"/><polygon points="1135.09,398.19 1431.96,469.34 1431.79,472.00 1135.01,400.88" fill="#ffa03c"/><polygon points="931.78,493.12 1134.76,409.66 1134.68,412.48 931.72,495.88" fill="#ff9f3a"/><polygon points="1134.76,409.66 1431.24,480.67 1431.07,483.45 1134.68,412.48" fill="#ffa03c"/><polygon points="931.67,498.33 1134.61,414.99 1134.52,417.88 931.61,501.15" fill="#ff9f3a"/><polygon points="1134.61,414.99 1430.91,485.93 1430.73,488.77 1134.52,417.88" fill="#ffa03c"/><polygon points="931.54,504.34 1134.43,421.14 1134.37,423.33 931.50,506.48" fill="#ff9f3a"/><polygon points="1134.43,421.14 1430.53,491.99 1430.39,494.16 1134.37,423.33" fill="#ffa03c"/><polygon points="931.35,513.41 1134.16,430.42 1134.07,433.61 931.28,516.54" fill="#ff9f3a"/><polygon points="1134.16,430.42 1429.95,501.15 1429.75,504.31 1134.07,433.61" fill="#ffa03c"/><polygon points="931.11,524.57 1133.84,441.83 1133.74,445.09 931.05,527.75" fill="#ff9f3a"/><polygon points="1133.84,441.83 1429.24,512.42 1429.04,515.64 1133.74,445.09" fill="#ffa03c"/><polygon points="931.00,529.96 1133.68,447.34 1133.60,450.10 930.94,532.66" fill="#ff9f3a"/><polygon points="1133.68,447.34 1428.90,517.87 1428.73,520.59 1133.60,450.10" fill="#ffa03c"/><polygon points="930.88,535.60 1133.51,453.11 1133.40,457.00 930.80,539.40" fill="#ff9f3a"/><polygon points="1133.51,453.11 1428.54,523.56 1428.30,527.40 1133.40,457.00" fill="#ffa03c"/><polyline points="932.10,478.10 1135.20,394.30 1432.20,465.50 1428.30,527.40 1226.50,611.30 930.80,539.40 932.10,478.10" fill="none" stroke="#ffa23e" stroke-width="1.2"/><polyline points="1135.20,394.30 1133.40,457.00" fill="none" stroke="#ffa23e" stroke-width="0.9"/></g>
<text x="128.3" y="105.70" font-size="15.2" font-weight="normal" fill="#1e1e1e" textLength="88.90" lengthAdjust="spacingAndGlyphs">Part Navigator</text><text x="113.6" y="133.70" font-size="15.3" font-weight="normal" fill="#1e1e1e" textLength="37.20" lengthAdjust="spacingAndGlyphs">Name</text><text x="438.5" y="133.50" font-size="15.2" font-weight="normal" fill="#1e1e1e" textLength="18.50" lengthAdjust="spacingAndGlyphs">C...</text><text x="467.2" y="133.50" font-size="15.2" font-weight="normal" fill="#1e1e1e" textLength="19.00" lengthAdjust="spacingAndGlyphs">U...</text><text x="495.6" y="133.50" font-size="15.2" font-weight="normal" fill="#1e1e1e" textLength="18.90" lengthAdjust="spacingAndGlyphs" clip-path="url(#coclip)">Co</text><text x="188.0" y="155.90" font-size="15.5" font-weight="normal" fill="#a3a3a3" textLength="241.10" lengthAdjust="spacingAndGlyphs" clip-path="url(#gridclip)">Body (47) &quot;Q1_SOT23_EBC_6500-003...</text><text x="188.0" y="178.16" font-size="15.5" font-weight="normal" fill="#a3a3a3" textLength="237.00" lengthAdjust="spacingAndGlyphs" clip-path="url(#gridclip)">Body (48) &quot;Q2_SOT23_GSD_6500-00...</text><text x="188.0" y="200.43" font-size="15.5" font-weight="normal" fill="#a3a3a3" textLength="237.00" lengthAdjust="spacingAndGlyphs" clip-path="url(#gridclip)">Body (49) &quot;Q3_SOT23_GSD_6500-00...</text><text x="188.0" y="222.69" font-size="15.5" font-weight="normal" fill="#a3a3a3" textLength="237.00" lengthAdjust="spacingAndGlyphs" clip-path="url(#gridclip)">Body (50) &quot;Q4_SOT23_GSD_6500-00...</text><text x="188.0" y="244.96" font-size="15.5" font-weight="normal" fill="#a3a3a3" textLength="237.00" lengthAdjust="spacingAndGlyphs" clip-path="url(#gridclip)">Body (51) &quot;Q5_SOT23_GSD_6500-00...</text><text x="188.0" y="267.22" font-size="15.5" font-weight="normal" fill="#a3a3a3" textLength="237.00" lengthAdjust="spacingAndGlyphs" clip-path="url(#gridclip)">Body (52) &quot;Q6_SOT23_GSD_6500-00...</text><text x="188.0" y="289.48" font-size="15.5" font-weight="normal" fill="#a3a3a3" textLength="237.00" lengthAdjust="spacingAndGlyphs" clip-path="url(#gridclip)">Body (53) &quot;Q7_SOT23_GSD_6500-00...</text><text x="188.0" y="311.75" font-size="15.5" font-weight="normal" fill="#a3a3a3" textLength="242.60" lengthAdjust="spacingAndGlyphs" clip-path="url(#gridclip)">Body (54) &quot;Q8_SOT23_GDS_2_6500-0...</text><text x="188.0" y="334.01" font-size="15.5" font-weight="normal" fill="#a3a3a3" textLength="242.60" lengthAdjust="spacingAndGlyphs" clip-path="url(#gridclip)">Body (55) &quot;Q9_SOT23_GDS_2_6500-0...</text><text x="188.0" y="356.28" font-size="15.5" font-weight="normal" fill="#a3a3a3" textLength="242.60" lengthAdjust="spacingAndGlyphs" clip-path="url(#gridclip)">Body (56) &quot;Q10_SOT23_GDS_2_6500-...</text><text x="188.0" y="378.54" font-size="15.5" font-weight="normal" fill="#a3a3a3" textLength="237.00" lengthAdjust="spacingAndGlyphs" clip-path="url(#gridclip)">Body (57) &quot;Q11_SOT23_GSD_6500-0...</text><text x="188.0" y="400.80" font-size="15.5" font-weight="normal" fill="#a3a3a3" textLength="226.20" lengthAdjust="spacingAndGlyphs" clip-path="url(#gridclip)">Body (58) &quot;Q12_MLP9A_6500-0035&quot;</text><text x="188.0" y="423.07" font-size="15.5" font-weight="normal" fill="#a3a3a3" textLength="241.00" lengthAdjust="spacingAndGlyphs" clip-path="url(#gridclip)">Body (59) &quot;S1_SM-SW-SPST-4-4_440...</text><text x="188.0" y="445.33" font-size="15.5" font-weight="normal" fill="#a3a3a3" textLength="242.60" lengthAdjust="spacingAndGlyphs" clip-path="url(#gridclip)">Body (60) &quot;U1_MSOP8A_HS_BV_6200...</text><text x="188.0" y="467.60" font-size="15.5" font-weight="normal" fill="#262626" textLength="240.80" lengthAdjust="spacingAndGlyphs" clip-path="url(#gridclip)">Body (61) &quot;U2_FCBGA-1170_6200-01...</text><text x="188.0" y="489.86" font-size="15.5" font-weight="normal" fill="#262626" textLength="204.60" lengthAdjust="spacingAndGlyphs" clip-path="url(#gridclip)">Body (62) &quot;TV-U2_DIELECTRIC_3&quot;</text><text x="188.0" y="512.12" font-size="15.5" font-weight="normal" fill="#262626" textLength="204.60" lengthAdjust="spacingAndGlyphs" clip-path="url(#gridclip)">Body (63) &quot;TV-U2_DIELECTRIC_5&quot;</text><text x="188.0" y="534.39" font-size="15.5" font-weight="normal" fill="#262626" textLength="204.60" lengthAdjust="spacingAndGlyphs" clip-path="url(#gridclip)">Body (64) &quot;TV-U2_DIELECTRIC_7&quot;</text><text x="188.0" y="556.65" font-size="15.5" font-weight="normal" fill="#262626" textLength="204.60" lengthAdjust="spacingAndGlyphs" clip-path="url(#gridclip)">Body (65) &quot;TV-U2_DIELECTRIC_9&quot;</text><text x="188.0" y="578.92" font-size="15.5" font-weight="normal" fill="#262626" textLength="212.90" lengthAdjust="spacingAndGlyphs" clip-path="url(#gridclip)">Body (66) &quot;TV-U2_DIELECTRIC_11&quot;</text><text x="188.0" y="601.18" font-size="15.5" font-weight="normal" fill="#262626" textLength="212.90" lengthAdjust="spacingAndGlyphs" clip-path="url(#gridclip)">Body (67) &quot;TV-U2_DIELECTRIC_13&quot;</text><text x="188.0" y="623.44" font-size="15.5" font-weight="normal" fill="#262626" textLength="212.90" lengthAdjust="spacingAndGlyphs" clip-path="url(#gridclip)">Body (68) &quot;TV-U2_DIELECTRIC_15&quot;</text><text x="188.0" y="645.71" font-size="15.5" font-weight="normal" fill="#262626" textLength="212.90" lengthAdjust="spacingAndGlyphs" clip-path="url(#gridclip)">Body (69) &quot;TV-U2_DIELECTRIC_17&quot;</text><text x="188.0" y="667.97" font-size="15.5" font-weight="normal" fill="#262626" textLength="212.90" lengthAdjust="spacingAndGlyphs" clip-path="url(#gridclip)">Body (70) &quot;TV-U2_DIELECTRIC_19&quot;</text><text x="188.0" y="690.24" font-size="15.5" font-weight="normal" fill="#262626" textLength="212.90" lengthAdjust="spacingAndGlyphs" clip-path="url(#gridclip)">Body (71) &quot;TV-U2_DIELECTRIC_21&quot;</text><text x="188.0" y="712.50" font-size="15.5" font-weight="normal" fill="#262626" textLength="212.90" lengthAdjust="spacingAndGlyphs" clip-path="url(#gridclip)">Body (72) &quot;TV-U2_DIELECTRIC_23&quot;</text><text x="188.0" y="734.76" font-size="15.5" font-weight="normal" fill="#a3a3a3" textLength="240.00" lengthAdjust="spacingAndGlyphs" clip-path="url(#gridclip)">Body (73) &quot;U16_FBGA96_DDR3_6200...</text><text x="188.0" y="757.03" font-size="15.5" font-weight="normal" fill="#a3a3a3" textLength="240.00" lengthAdjust="spacingAndGlyphs" clip-path="url(#gridclip)">Body (74) &quot;U17_FBGA96_DDR3_6200...</text><text x="188.0" y="779.29" font-size="15.5" font-weight="normal" fill="#a3a3a3" textLength="240.00" lengthAdjust="spacingAndGlyphs" clip-path="url(#gridclip)">Body (75) &quot;U18_FBGA96_DDR3_6200...</text><text x="188.0" y="801.56" font-size="15.5" font-weight="normal" fill="#a3a3a3" textLength="240.00" lengthAdjust="spacingAndGlyphs" clip-path="url(#gridclip)">Body (76) &quot;U19_FBGA96_DDR3_6200...</text><text x="561.3000000000001" y="271.10" font-size="10.5" font-weight="normal" fill="#1e1e1e" textLength="40.40" lengthAdjust="spacingAndGlyphs">Project(1)</text><text x="580.5" y="288.67" font-size="10.5" font-weight="normal" fill="#1e1e1e" textLength="46.00" lengthAdjust="spacingAndGlyphs">Input Data</text><text x="599.6" y="306.23" font-size="10.5" font-weight="normal" fill="#1e1e1e" textLength="102.40" lengthAdjust="spacingAndGlyphs">Computational Domain</text><text x="599.5" y="323.80" font-size="10.5" font-weight="normal" fill="#1e1e1e" textLength="78.90" lengthAdjust="spacingAndGlyphs">Fluid Subdomains</text><text x="599.5" y="341.36" font-size="10.5" font-weight="normal" fill="#1e1e1e" textLength="63.80" lengthAdjust="spacingAndGlyphs">Solid Materials</text><text x="618.8000000000001" y="358.93" font-size="10.5" font-weight="normal" fill="#1e1e1e" textLength="83.70" lengthAdjust="spacingAndGlyphs">Copper_FR4_37.9_s</text><text x="618.8000000000001" y="376.49" font-size="10.5" font-weight="normal" fill="#1e1e1e" textLength="78.20" lengthAdjust="spacingAndGlyphs">Copper_FR4_2.9_s</text><text x="618.8000000000001" y="394.06" font-size="10.5" font-weight="normal" fill="#1e1e1e" textLength="83.70" lengthAdjust="spacingAndGlyphs">Copper_FR4_91.3_s</text><text x="618.8000000000001" y="411.62" font-size="10.5" font-weight="normal" fill="#1e1e1e" textLength="83.70" lengthAdjust="spacingAndGlyphs">Copper_FR4_28.9_s</text><text x="618.8000000000001" y="429.19" font-size="10.5" font-weight="normal" fill="#1e1e1e" textLength="83.70" lengthAdjust="spacingAndGlyphs">Copper_FR4_91.2_s</text><text x="618.8000000000001" y="446.75" font-size="10.5" font-weight="normal" fill="#1e1e1e" textLength="83.70" lengthAdjust="spacingAndGlyphs">Copper_FR4_12.7_s</text><text x="618.8000000000001" y="464.31" font-size="10.5" font-weight="normal" fill="#1e1e1e" textLength="83.70" lengthAdjust="spacingAndGlyphs">Copper_FR4_87.6_s</text><text x="618.8000000000001" y="481.88" font-size="10.5" font-weight="normal" fill="#1e1e1e" textLength="83.70" lengthAdjust="spacingAndGlyphs">Copper_FR4_90.4_s</text><text x="618.8000000000001" y="499.45" font-size="10.5" font-weight="normal" fill="#1e1e1e" textLength="83.70" lengthAdjust="spacingAndGlyphs">Copper_FR4_17.3_s</text><text x="618.8000000000001" y="517.01" font-size="10.5" font-weight="normal" fill="#1e1e1e" textLength="83.70" lengthAdjust="spacingAndGlyphs">Copper_FR4_29.6_s</text><text x="618.8000000000001" y="534.58" font-size="10.5" font-weight="normal" fill="#1e1e1e" textLength="83.70" lengthAdjust="spacingAndGlyphs">Copper_FR4_37.5_s</text><text x="619.1" y="552.14" font-size="10.5" font-weight="normal" fill="#ffffff" textLength="182.90" lengthAdjust="spacingAndGlyphs">Copper_FR4_1.75297861321564_Solder_d</text><text x="619.1" y="569.70" font-size="10.5" font-weight="normal" fill="#1e1e1e" textLength="97.80" lengthAdjust="spacingAndGlyphs">Typical Plastic Package</text><text x="599.9000000000001" y="587.27" font-size="10.5" font-weight="normal" fill="#1e1e1e" textLength="91.70" lengthAdjust="spacingAndGlyphs">Boundary Conditions</text><text x="599.5" y="604.84" font-size="10.5" font-weight="normal" fill="#1e1e1e" textLength="78.90" lengthAdjust="spacingAndGlyphs">Radiative Surfaces</text><text x="599.5" y="622.40" font-size="10.5" font-weight="normal" fill="#1e1e1e" textLength="87.00" lengthAdjust="spacingAndGlyphs">Thermal Resistances</text><text x="599.5" y="639.96" font-size="10.5" font-weight="normal" fill="#1e1e1e" textLength="24.40" lengthAdjust="spacingAndGlyphs">Goals</text><text x="599.5" y="657.53" font-size="10.5" font-weight="normal" fill="#1e1e1e" textLength="23.80" lengthAdjust="spacingAndGlyphs">Mesh</text><text x="618.8000000000001" y="675.10" font-size="10.5" font-weight="normal" fill="#1e1e1e" textLength="54.50" lengthAdjust="spacingAndGlyphs">Global Mesh</text><text x="561.3" y="206.90" font-size="10.5" font-weight="normal" fill="#1e1e1e" textLength="33.90" lengthAdjust="spacingAndGlyphs">Projects</text><text x="580.5" y="224.40" font-size="10.5" font-weight="normal" fill="#1e1e1e" textLength="32.60" lengthAdjust="spacingAndGlyphs">model1</text><text x="599.8" y="241.80" font-size="10.5" font-weight="bold" fill="#111111" textLength="45.60" lengthAdjust="spacingAndGlyphs">Project(1)</text>
</svg>
</body></html>
